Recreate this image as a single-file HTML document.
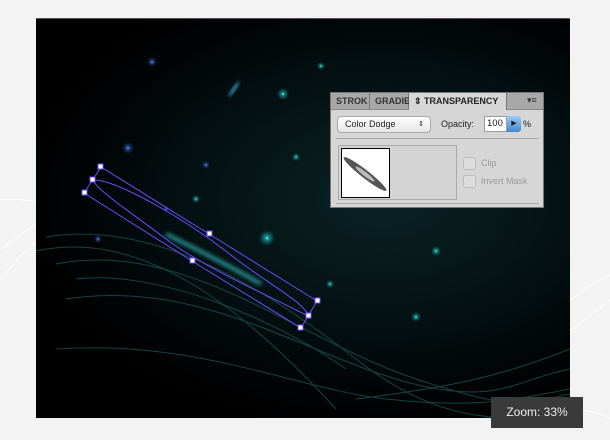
<!DOCTYPE html>
<html><head><style>
body{margin:0;width:610px;height:440px;background:#f3f3f3;position:relative;overflow:hidden;font-family:"Liberation Sans",sans-serif}
#cv{position:absolute;left:36px;top:18px;width:534px;height:399px;background:radial-gradient(ellipse 70% 60% at 65% 45%,#0a2325 0%,#051315 45%,#010405 80%,#000 100%);border-top:1px solid #555;overflow:hidden}
#zoom{position:absolute;left:491px;top:397px;width:92px;height:31px;background:#3a3a3a;color:#eee;font-size:12px;line-height:31px;text-align:center}
#pn{position:absolute;left:330px;top:92px;width:214px;height:116px;background:#d6d6d6;border:1px solid #777;box-sizing:border-box;font-size:9px;color:#222}
.tab{position:absolute;top:0;height:16px;line-height:16px;font-weight:bold;background:#a8a8a8;color:#333;padding-left:5px;box-sizing:border-box;border-right:1px solid #777;font-size:9px}
</style></head><body>
<div id="cv">
<svg width="534" height="399" style="position:absolute;left:0;top:0">
<defs><radialGradient id="g"><stop offset="0" stop-color="#5ff"/><stop offset=".3" stop-color="#2bb" stop-opacity=".6"/><stop offset="1" stop-color="#0aa" stop-opacity="0"/></radialGradient>
<radialGradient id="b"><stop offset="0" stop-color="#7af"/><stop offset=".3" stop-color="#36c" stop-opacity=".6"/><stop offset="1" stop-color="#24a" stop-opacity="0"/></radialGradient>
<filter id="bl"><feGaussianBlur stdDeviation="2"/></filter></defs>
<g fill="url(#g)"><circle cx="231" cy="219" r="8"/><circle cx="247" cy="75" r="6"/><circle cx="424" cy="80" r="6"/><circle cx="260" cy="138" r="4"/><circle cx="294" cy="265" r="4"/><circle cx="400" cy="232" r="5"/><circle cx="380" cy="298" r="5"/><circle cx="285" cy="47" r="4"/><circle cx="160" cy="180" r="4"/></g>
<g fill="url(#b)"><circle cx="92" cy="129" r="6"/><circle cx="116" cy="43" r="5"/><circle cx="170" cy="146" r="4"/><circle cx="62" cy="220" r="4"/><circle cx="130" cy="190" r="3"/></g>
<ellipse cx="198" cy="70" rx="2" ry="9" fill="#3ad" transform="rotate(35 198 70)" opacity=".9" filter="url(#bl)"/>
<g fill="none" stroke="#1f6f6e" stroke-width="1" opacity=".6">
<path d="M10 218 C120 200 230 270 320 340 S470 400 534 395"/>
<path d="M20 245 C150 220 260 320 380 360 S500 380 534 375"/>
<path d="M30 280 C160 260 260 330 360 360 S480 360 534 350"/>
<path d="M20 330 C160 320 260 370 350 380 S480 380 534 370"/>
<path d="M40 260 C120 250 240 300 310 350"/>
<path d="M0 232 C100 210 200 280 300 390"/>
<path d="M320 380 C400 370 460 360 534 330"/>
</g>
<path d="M130 215 C160 230 190 245 225 265" stroke="#4ff" stroke-width="3" opacity=".7" fill="none" filter="url(#bl)"/>
<g fill="none" stroke="#6a4cff" stroke-width="1">
<path d="M65 148 L173 215 L281 282 L265 309 L156 242 L48 174 Z"/>
<path d="M57 161 C80 160 150 200 200 240 C240 270 270 285 272 297 C240 280 170 250 130 220 C90 190 60 170 57 161 Z"/>
</g>
<g fill="#fff" stroke="#6a4cff" stroke-width="1">
<rect x="62" y="145" width="5" height="5"/><rect x="54" y="158" width="5" height="5"/><rect x="46" y="171" width="5" height="5"/>
<rect x="171" y="212" width="5" height="5"/><rect x="154" y="239" width="5" height="5"/>
<rect x="279" y="279" width="5" height="5"/><rect x="270" y="294" width="5" height="5"/><rect x="262" y="306" width="5" height="5"/>
</g>
</svg>
</div>
<svg width="610" height="440" style="position:absolute;left:0;top:0" fill="none" stroke="#fff" stroke-width="1.2" opacity=".8">
<path d="M0 250 C15 240 25 230 36 225"/><path d="M0 280 C15 262 25 250 36 242"/><path d="M0 200 C15 198 25 200 36 202"/>
<path d="M570 300 C585 290 598 280 610 275"/><path d="M570 330 C585 320 598 310 610 300"/><path d="M583 410 C595 412 603 415 610 418"/>
</svg>
<div id="pn">
<div style="position:absolute;left:0;top:0;width:212px;height:16px;background:#a8a8a8;border-bottom:1px solid #888"></div>
<div class="tab" style="left:0;width:39px">STROK</div>
<div class="tab" style="left:39px;width:39px">GRADIE</div>
<div class="tab" style="left:78px;width:98px;background:#d6d6d6;color:#222;height:17px">⇕ TRANSPARENCY</div>
<div style="position:absolute;left:196px;top:2px;font-size:9px;color:#333">▾≡</div>
<div style="position:absolute;left:6px;top:23px;width:94px;height:17px;background:linear-gradient(#fff,#e6e6e6);border:1px solid #aaa;border-radius:4px;box-sizing:border-box;line-height:15px;padding-left:7px;font-size:9px">Color Dodge<span style="position:absolute;right:6px;font-size:7px">⇕</span></div>
<div style="position:absolute;left:110px;top:26px">Opacity:</div>
<div style="position:absolute;left:153px;top:23px;width:23px;height:16px;background:#fff;border:1px solid #999;box-sizing:border-box;line-height:14px;padding-left:2px;font-size:9.5px">100</div>
<div style="position:absolute;left:176px;top:23px;width:14px;height:16px;background:linear-gradient(#9cf,#48c);border-radius:0 3px 3px 0;font-size:7px;text-align:center;line-height:16px">▶</div>
<div style="position:absolute;left:192px;top:26px">%</div>
<div style="position:absolute;left:5px;top:45px;width:203px;border-top:1px solid #aaa"></div>
<div style="position:absolute;left:7px;top:52px;width:119px;height:55px;border:1px solid #aaa;box-sizing:border-box;background:#d4d4d4"></div>
<div style="position:absolute;left:10px;top:55px;width:49px;height:50px;background:#fff;border:1px solid #000;box-sizing:border-box">
<svg width="47" height="48"><ellipse cx="23" cy="25" rx="27" ry="4" fill="#555" transform="rotate(38 23 25)"/><ellipse cx="23" cy="25" rx="12" ry="2" fill="#bbb" transform="rotate(38 23 25)"/></svg></div>
<div style="position:absolute;left:132px;top:64px;width:11px;height:11px;border:1px solid #bbb;border-radius:3px;background:#ddd"></div>
<div style="position:absolute;left:150px;top:65px;color:#999">Clip</div>
<div style="position:absolute;left:132px;top:82px;width:11px;height:11px;border:1px solid #bbb;border-radius:3px;background:#ddd"></div>
<div style="position:absolute;left:150px;top:83px;color:#999">Invert Mask</div>
<div style="position:absolute;left:5px;top:110px;width:203px;border-top:1px solid #aaa"></div>
</div>
<div id="zoom">Zoom: 33%</div>
</body></html>
